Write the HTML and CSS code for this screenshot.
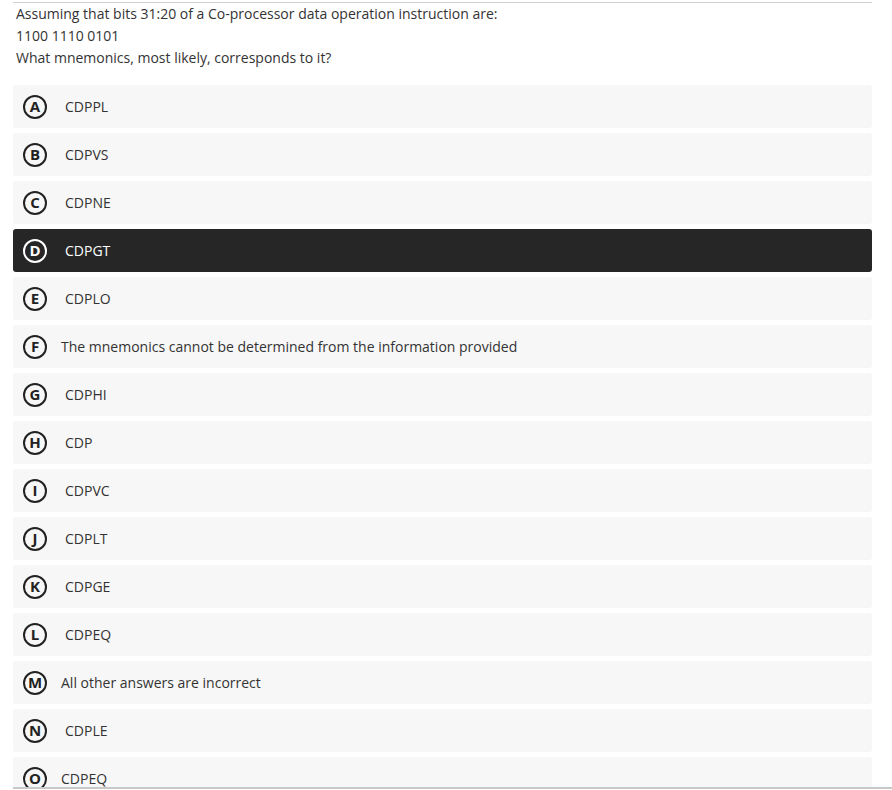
FILE: index.html
```html
<!DOCTYPE html>
<html>
<head>
<meta charset="utf-8">
<link rel="stylesheet" href="styles.css">
</head>
<body>
<div class="page">
  <div class="frame">
    <div class="question">
      <p>Assuming that bits 31:20 of a Co-processor data operation instruction are:</p>
      <p>1100 1110 0101</p>
      <p>What mnemonics, most likely, corresponds to it?</p>
    </div>
    <div class="options">
      <div class="opt"><span class="badge">A</span><span class="label">CDPPL</span></div>
      <div class="opt"><span class="badge">B</span><span class="label">CDPVS</span></div>
      <div class="opt"><span class="badge">C</span><span class="label">CDPNE</span></div>
      <div class="opt selected"><span class="badge">D</span><span class="label">CDPGT</span></div>
      <div class="opt"><span class="badge">E</span><span class="label">CDPLO</span></div>
      <div class="opt tight"><span class="badge">F</span><span class="label">The mnemonics cannot be determined from the information provided</span></div>
      <div class="opt"><span class="badge">G</span><span class="label">CDPHI</span></div>
      <div class="opt"><span class="badge">H</span><span class="label">CDP</span></div>
      <div class="opt"><span class="badge">I</span><span class="label">CDPVC</span></div>
      <div class="opt"><span class="badge">J</span><span class="label">CDPLT</span></div>
      <div class="opt"><span class="badge">K</span><span class="label">CDPGE</span></div>
      <div class="opt"><span class="badge">L</span><span class="label">CDPEQ</span></div>
      <div class="opt tight"><span class="badge">M</span><span class="label">All other answers are incorrect</span></div>
      <div class="opt"><span class="badge">N</span><span class="label">CDPLE</span></div>
      <div class="opt tight"><span class="badge">O</span><span class="label">CDPEQ</span></div>
    </div>
  </div>
  <div class="bottom-rule"></div>
</div>
</body>
</html>
```
FILE: styles.css
```css
html, body {
  margin: 0;
  padding: 0;
  background: #ffffff;
  overflow: hidden;
}
body {
  font-family: "Open Sans", "Liberation Sans", sans-serif;
  font-size: 14px;
  color: #333333;
}
.page {
  padding-top: 2px;
  padding-left: 13px;
}
.frame {
  width: 859px;
  height: 785px;
  overflow: hidden;
  border-top: 1px solid #d0d0d0;
  box-sizing: border-box;
}
.question {
  padding: 0 0 0 3px;
}
.question p {
  margin: 0;
  line-height: 22px;
}
.options {
  margin-top: 16px;
  display: flex;
  flex-direction: column;
  gap: 5px;
}
.opt {
  height: 43px;
  flex: none;
  background: #f7f7f7;
  border-radius: 3px;
  display: flex;
  align-items: center;
  padding-left: 10px;
  color: #333333;
}
.badge {
  width: 24px;
  height: 24px;
  box-sizing: border-box;
  border: 2px solid #222222;
  border-radius: 50%;
  display: flex;
  align-items: center;
  justify-content: center;
  font-weight: 700;
  font-size: 15px;
  line-height: 1;
  color: #222222;
  flex: none;
}
.label {
  margin-left: 18px;
}
.tight .label {
  margin-left: 14px;
}
.selected {
  background: #262626;
  color: #ffffff;
}
.selected .badge {
  border-color: #ffffff;
  color: #ffffff;
}
.bottom-rule {
  height: 2px;
  background: #c8c8c8;
  width: 879px;
}
```
